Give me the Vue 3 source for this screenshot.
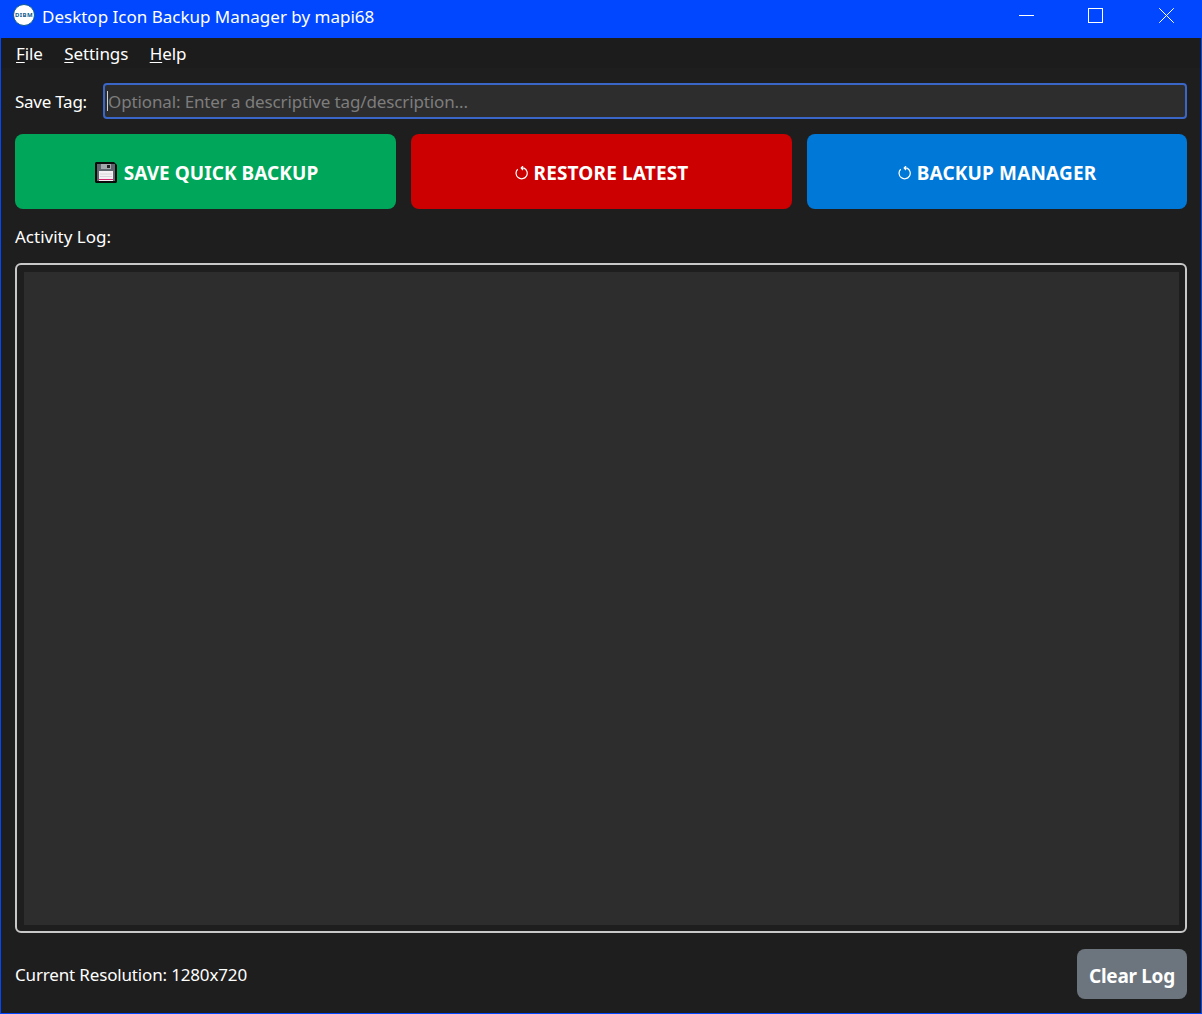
<template>
  <div class="window">
    <header class="titlebar">
      <div class="app-logo"><span>DIBM</span></div>
      <div class="app-title">Desktop Icon Backup Manager by mapi68</div>
      <div class="window-controls">
        <button class="win-btn minimize" aria-label="Minimize">
          <svg width="15" height="15" viewBox="0 0 15 15"><path d="M0 7.5h15" stroke="#fff" fill="none" /></svg>
        </button>
        <button class="win-btn" aria-label="Maximize">
          <svg width="15" height="15" viewBox="0 0 15 15"><rect x="0.5" y="0.5" width="14" height="14" stroke="#fff" fill="none" /></svg>
        </button>
        <button class="win-btn" aria-label="Close">
          <svg width="15" height="15" viewBox="0 0 15 15"><path d="M0.2 0.2l14.6 14.6M14.8 0.2l-14.6 14.6" stroke="#fff" fill="none" /></svg>
        </button>
      </div>
    </header>

    <nav class="menubar">
      <span v-for="item in menus" :key="item" class="menu-item"><u>{{ item[0] }}</u>{{ item.slice(1) }}</span>
    </nav>

    <main class="content">
      <div class="tag-row">
        <label class="tag-label">Save Tag:</label>
        <div class="tag-input">
          <span class="caret"></span>
          <span class="placeholder">Optional: Enter a descriptive tag/description...</span>
        </div>
      </div>

      <div class="actions">
        <button class="action save">
          <svg class="floppy" width="22" height="21" viewBox="0 0 22 21">
            <path d="M1 0h18l3 3v17l-1 1H1l-1-1V1z" fill="#0c0c0c" />
            <rect x="2" y="2" width="18" height="17" fill="#5f656c" />
            <rect x="6" y="2" width="10" height="5" fill="#a3a8ad" />
            <rect x="12" y="3" width="3" height="3" fill="#222" />
            <rect x="4" y="9" width="14" height="10" fill="#f3eff2" />
            <path d="M5 12h12M5 14.5h12" stroke="#d8d5da" />
            <rect x="4" y="17" width="14" height="1" fill="#d3246e" />
          </svg>
          SAVE QUICK BACKUP
        </button>
        <button class="action restore">
          <svg class="reload" width="14" height="14" viewBox="0 0 14 14"><path d="M2.7 3.2A5.6 5.6 0 1 0 9 2.1L6.4 2M8 0L6.2 2L8 4" /></svg>
          RESTORE LATEST
        </button>
        <button class="action manager">
          <svg class="reload" width="14" height="14" viewBox="0 0 14 14"><path d="M2.7 3.2A5.6 5.6 0 1 0 9 2.1L6.4 2M8 0L6.2 2L8 4" /></svg>
          BACKUP MANAGER
        </button>
      </div>

      <div class="log-label">Activity Log:</div>
      <div class="log-box">
        <div class="log-inner"></div>
      </div>

      <footer class="statusrow">
        <span class="resolution">Current Resolution: {{ resolution }}</span>
        <button class="clear-btn">Clear Log</button>
      </footer>
    </main>
  </div>
</template>

<script setup>
const menus = ['File', 'Settings', 'Help']
const resolution = '1280x720'
</script>

<style>
html, body {
  margin: 0;
  background: #1e1e1e;
}
</style>

<style scoped>
.window {
  box-sizing: border-box;
  width: 1202px;
  height: 1014px;
  display: flex;
  flex-direction: column;
  background: #1e1e1e;
  border: 1px solid #0047ff;
  border-top: none;
  font-family: "Noto Sans", "Open Sans", sans-serif;
  color: #fff;
}

.titlebar {
  height: 38px;
  flex: none;
  display: flex;
  align-items: flex-start;
  background: #0047ff;
  margin: 0 -1px;
}

.app-logo {
  width: 22px;
  height: 22px;
  margin: 4px 7px 0 13px;
  box-sizing: border-box;
  border: 1px solid #0d5c8f;
  border-radius: 50%;
  background: #fff;
  display: flex;
  align-items: center;
  justify-content: center;
}

.app-logo span {
  font-size: 6px;
  font-weight: 700;
  color: #0d5c8f;
  letter-spacing: 0.4px;
}

.app-title {
  flex: 1;
  font-size: 17px;
  line-height: 34px;
}

.window-controls {
  display: flex;
}

.win-btn {
  box-sizing: border-box;
  width: 71px;
  height: 38px;
  padding: 8px 0 0;
  border: none;
  background: none;
  display: flex;
  align-items: flex-start;
  justify-content: center;
}

.minimize {
  padding-left: 4px;
}

.menubar {
  height: 30px;
  flex: none;
  display: flex;
  align-items: center;
  gap: 21.5px;
  padding-left: 15px;
  background: #1c1c1c;
  font-size: 17px;
  letter-spacing: -0.1px;
}

.menu-item u {
  text-underline-offset: 2px;
  text-decoration-thickness: 1px;
}

.content {
  flex: 1;
  min-height: 0;
  display: flex;
  flex-direction: column;
  padding: 15px 14px 14px 14px;
}

.tag-row {
  display: flex;
  align-items: center;
  gap: 16px;
  height: 36px;
}

.tag-label {
  font-size: 17px;
  letter-spacing: -0.25px;
  width: 72px;
  white-space: nowrap;
}

.tag-input {
  flex: 1;
  box-sizing: border-box;
  height: 36px;
  display: flex;
  align-items: center;
  padding-left: 2px;
  background: #2d2d2d;
  border: 2px solid #3a66c8;
  border-radius: 4px;
  font-size: 17px;
  letter-spacing: -0.13px;
}

.caret {
  width: 1px;
  height: 20px;
  background: #d0d0d0;
}

.placeholder {
  color: #7d7d7d;
}

.actions {
  display: grid;
  grid-template-columns: 381px 381px 380px;
  gap: 15px;
  margin-top: 15px;
}

.action {
  height: 75px;
  padding: 2px 0 0;
  border: none;
  border-radius: 8px;
  display: flex;
  align-items: center;
  justify-content: center;
  gap: 5px;
  color: #fff;
  font-family: inherit;
  font-size: 19px;
  font-weight: 700;
  letter-spacing: 0.15px;
}

.save {
  gap: 7px;
  padding-left: 2px;
  letter-spacing: 0.05px;
  background: #00a65a;
}

.restore {
  background: #cc0000;
}

.manager {
  background: #0078d7;
}

.reload path {
  fill: none;
  stroke: #fff;
  stroke-width: 1.2;
}

.log-label {
  margin-top: 16px;
  height: 23px;
  line-height: 23px;
  font-size: 17px;
}

.log-box {
  flex: 1;
  min-height: 0;
  margin-top: 15px;
  box-sizing: border-box;
  display: flex;
  padding: 7px 6px 6px 7px;
  border: 2px solid #c8c8c8;
  border-radius: 6px;
}

.log-inner {
  flex: 1;
  background: #2d2d2d;
}

.statusrow {
  display: flex;
  align-items: center;
  justify-content: space-between;
  margin-top: 16px;
}

.resolution {
  font-size: 17px;
  letter-spacing: -0.16px;
}

.clear-btn {
  width: 110px;
  height: 50px;
  padding: 3px 0 0;
  border: none;
  border-radius: 8px;
  background: #6c757d;
  color: #fff;
  font-family: inherit;
  font-size: 19px;
  font-weight: 700;
  letter-spacing: -0.3px;
}
</style>
